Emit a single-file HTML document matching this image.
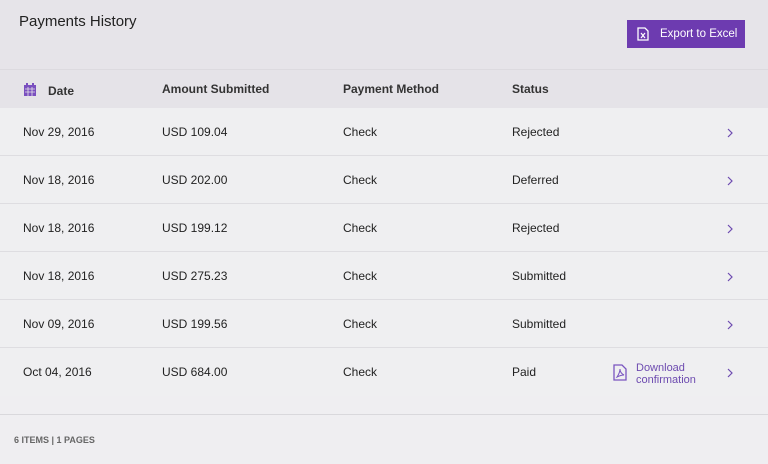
<!DOCTYPE html>
<html><head><style>
body{margin:0;width:768px;height:463px;overflow:hidden;font-family:"Liberation Sans",sans-serif;background:#efeef1;color:#222;}
.top{height:69px;background:#e6e4e9;position:relative;}
.top h1{position:absolute;left:19px;top:13px;margin:0;font-size:15px;font-weight:normal;color:#222;}
.btn{position:absolute;left:627px;top:20px;width:118px;height:28px;background:#6d3bb0;color:#fff;font-size:11.5px;line-height:28px;}
.btn span{position:absolute;left:33px;}
.btn svg{position:absolute;left:10px;top:7px;}
.hdr{height:39px;background:#e5e3e8;border-top:1px solid #dcdadf;position:relative;font-size:12px;font-weight:bold;color:#333;box-sizing:border-box;}
.c{position:absolute;}
.row{height:48px;border-bottom:1px solid #dedde1;box-sizing:border-box;position:relative;font-size:12px;background:#efeff1;}
.row .c{top:17px;}
.chev{position:absolute;left:727px;top:20px;}
.foot{position:absolute;top:414px;left:0;width:768px;height:49px;border-top:1px solid #d9d8dc;font-size:9px;font-weight:bold;color:#666;}
</style></head><body>
<div class="top"><h1>Payments History</h1>
<div class="btn"><svg width="12" height="14" viewBox="0 0 12 14"><path d="M1 1h7l3 3v9H1z" fill="none" stroke="#fff" stroke-width="1.3"/><path d="M4 6l4 5M8 6l-4 5" stroke="#fff" stroke-width="1.2"/></svg><span>Export to Excel</span></div></div>
<div class="hdr">
<svg class="c" style="left:24px;top:13px" width="12" height="13" viewBox="0 0 12 13"><rect x="0" y="2" width="12" height="11" fill="#7a4fbf"/><rect x="2" y="0" width="2" height="3" fill="#7a4fbf"/><rect x="8" y="0" width="2" height="3" fill="#7a4fbf"/><path d="M1 6h10M1 9h10M4 4v9M8 4v9" stroke="#e5e3e8" stroke-width=".8"/></svg>
<span class="c" style="left:48px;top:14px">Date</span>
<span class="c" style="left:162px;top:12px">Amount Submitted</span>
<span class="c" style="left:343px;top:12px">Payment Method</span>
<span class="c" style="left:512px;top:12px">Status</span>
</div>
<div class="row"><span class="c" style="left:23px">Nov 29, 2016</span><span class="c" style="left:162px">USD 109.04</span><span class="c" style="left:343px">Check</span><span class="c" style="left:512px">Rejected</span><svg class="chev" width="6" height="10" viewBox="0 0 6 10"><path d="M1 1l4 4-4 4" fill="none" stroke="#6d4bb0" stroke-width="1.2"/></svg></div>
<div class="row"><span class="c" style="left:23px">Nov 18, 2016</span><span class="c" style="left:162px">USD 202.00</span><span class="c" style="left:343px">Check</span><span class="c" style="left:512px">Deferred</span><svg class="chev" width="6" height="10" viewBox="0 0 6 10"><path d="M1 1l4 4-4 4" fill="none" stroke="#6d4bb0" stroke-width="1.2"/></svg></div>
<div class="row"><span class="c" style="left:23px">Nov 18, 2016</span><span class="c" style="left:162px">USD 199.12</span><span class="c" style="left:343px">Check</span><span class="c" style="left:512px">Rejected</span><svg class="chev" width="6" height="10" viewBox="0 0 6 10"><path d="M1 1l4 4-4 4" fill="none" stroke="#6d4bb0" stroke-width="1.2"/></svg></div>
<div class="row"><span class="c" style="left:23px">Nov 18, 2016</span><span class="c" style="left:162px">USD 275.23</span><span class="c" style="left:343px">Check</span><span class="c" style="left:512px">Submitted</span><svg class="chev" width="6" height="10" viewBox="0 0 6 10"><path d="M1 1l4 4-4 4" fill="none" stroke="#6d4bb0" stroke-width="1.2"/></svg></div>
<div class="row"><span class="c" style="left:23px">Nov 09, 2016</span><span class="c" style="left:162px">USD 199.56</span><span class="c" style="left:343px">Check</span><span class="c" style="left:512px">Submitted</span><svg class="chev" width="6" height="10" viewBox="0 0 6 10"><path d="M1 1l4 4-4 4" fill="none" stroke="#6d4bb0" stroke-width="1.2"/></svg></div>
<div class="row" style="border:none"><span class="c" style="left:23px">Oct 04, 2016</span><span class="c" style="left:162px">USD 684.00</span><span class="c" style="left:343px">Check</span><span class="c" style="left:512px">Paid</span>
<svg class="c" style="left:613px;top:16px" width="14" height="17" viewBox="0 0 14 17"><path d="M1 1h8l4 4v11H1z" fill="none" stroke="#7a55c0" stroke-width="1.3"/><path d="M4 13c2-3 3-6 3-8 0 3 2 5 4 6-3 0-5 1-7 2z" fill="none" stroke="#7a55c0" stroke-width="1"/></svg>
<span class="c" style="left:636px;top:14px;color:#6d4bb0;font-size:11px;line-height:12px">Download<br>confirmation</span><svg class="chev" width="6" height="10" viewBox="0 0 6 10"><path d="M1 1l4 4-4 4" fill="none" stroke="#6d4bb0" stroke-width="1.2"/></svg></div>
<div class="foot"><span class="c" style="left:14px;top:20px">6 ITEMS | 1 PAGES</span></div>
</body></html>
